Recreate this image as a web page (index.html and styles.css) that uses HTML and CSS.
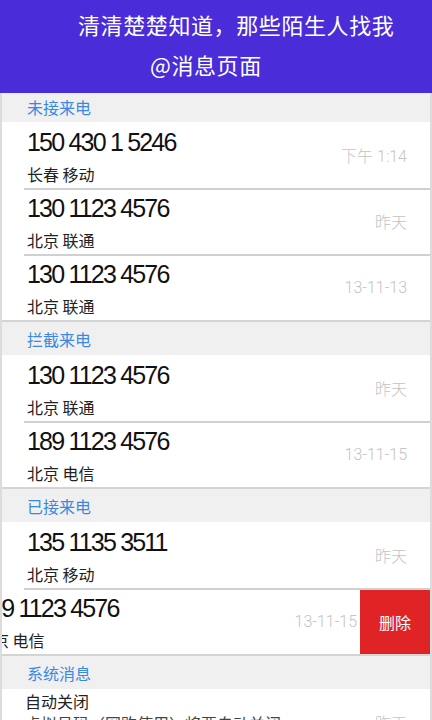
FILE: index.html
```html
<!DOCTYPE html>
<html lang="zh-CN">
<head>
    <meta charset="UTF-8">
    <title>消息页面</title>
    <link rel="stylesheet" href="styles.css">
</head>
<body>
    <header class="top">
        <div class="top-title">清清楚楚知道，那些陌生人找我</div>
        <div class="top-sub">@消息页面</div>
    </header>

    <div class="list">
        <div class="group-title first">未接来电</div>
        <div class="call">
            <div class="call-inner">
                <div class="call-main">
                    <div class="num">150 430 1 5246</div>
                    <div class="area">长春 移动</div>
                </div>
                <div class="time">下午 1:14</div>
            </div>
        </div>
        <div class="call">
            <div class="call-inner">
                <div class="call-main">
                    <div class="num">130 1123 4576</div>
                    <div class="area">北京 联通</div>
                </div>
                <div class="time">昨天</div>
            </div>
        </div>
        <div class="call">
            <div class="call-inner">
                <div class="call-main">
                    <div class="num">130 1123 4576</div>
                    <div class="area">北京 联通</div>
                </div>
                <div class="time">13-11-13</div>
            </div>
        </div>

        <div class="group-title">拦截来电</div>
        <div class="call">
            <div class="call-inner">
                <div class="call-main">
                    <div class="num">130 1123 4576</div>
                    <div class="area">北京 联通</div>
                </div>
                <div class="time">昨天</div>
            </div>
        </div>
        <div class="call">
            <div class="call-inner">
                <div class="call-main">
                    <div class="num">189 1123 4576</div>
                    <div class="area">北京 电信</div>
                </div>
                <div class="time">13-11-15</div>
            </div>
        </div>

        <div class="group-title">已接来电</div>
        <div class="call">
            <div class="call-inner">
                <div class="call-main">
                    <div class="num">135 1135 3511</div>
                    <div class="area">北京 移动</div>
                </div>
                <div class="time">昨天</div>
            </div>
        </div>
        <div class="call swiped">
            <div class="call-inner">
                <div class="call-main">
                    <div class="num">189 1123 4576</div>
                    <div class="area">北京 电信</div>
                </div>
                <div class="time">13-11-15</div>
            </div>
            <div class="delete">删除</div>
        </div>

        <div class="group-title">系统消息</div>
        <div class="notice">
            <div class="notice-main">
                <div class="notice-title">自动关闭</div>
                <div class="notice-text">虚拟号码（网购使用）将要自动关闭</div>
            </div>
            <div class="time">昨天</div>
        </div>
    </div>
</body>
</html>
```

FILE: styles.css
```css
body {
    margin: 0;
    background: #dcdcdc;
    font-family: "Noto Sans CJK SC", sans-serif;
}

.top {
    background-color: #4a2dd8;
    color: white;
    height: 93px;
    box-sizing: border-box;
    padding-top: 4px;
    font-size: 22px;
    line-height: 40px;
    letter-spacing: 0.6px;
}

.top-title {
    padding-left: 78px;
}

.top-sub {
    padding-left: 150px;
}

.list {
    margin: 0 2px;
}

.group-title {
    background: #f0f0f0;
    border-top: 2px solid #d4d4d4;
    height: 33px;
    line-height: 34px;
    padding-left: 25px;
    font-size: 16px;
    color: #3a88e0;
}

.group-title.first {
    border-top: none;
    height: 29px;
    line-height: 29px;
}

.call {
    background: white;
    position: relative;
    overflow: hidden;
    height: 66px;
}

.call + .call::before {
    content: "";
    position: absolute;
    left: 22px;
    right: 0;
    top: 0;
    height: 2px;
    background: #d0d0d0;
    z-index: 1;
}

.call-inner {
    display: flex;
    align-items: center;
    height: 100%;
    padding: 0 23px 0 25px;
    box-sizing: border-box;
}

.call-main {
    flex: 1;
    align-self: flex-start;
    padding-top: 6px;
}

.num {
    font-family: "Liberation Sans", sans-serif;
    font-size: 25px;
    line-height: 28px;
    letter-spacing: -1.8px;
    color: #111;
}

.area {
    margin-top: 7px;
    font-size: 16px;
    line-height: 22px;
    color: #222;
}

.time {
    font-family: Roboto, "Noto Sans CJK SC", sans-serif;
    font-weight: 300;
    font-size: 16px;
    color: #c4c4c4;
}

.swiped .call-inner {
    transform: translateX(-50px);
}

.delete {
    position: absolute;
    right: 0;
    top: 2px;
    bottom: 0;
    width: 70px;
    background: #e02426;
    color: white;
    font-size: 16px;
    display: flex;
    align-items: center;
    justify-content: center;
    z-index: 2;
}

.notice {
    background: white;
    display: flex;
    align-items: flex-end;
    padding: 1px 23px 0 23px;
}

.notice-main {
    flex: 1;
}

.notice-title {
    font-size: 16px;
    line-height: 22px;
    color: #222;
}

.notice-text {
    font-size: 16px;
    line-height: 22px;
    color: #444;
}
```
